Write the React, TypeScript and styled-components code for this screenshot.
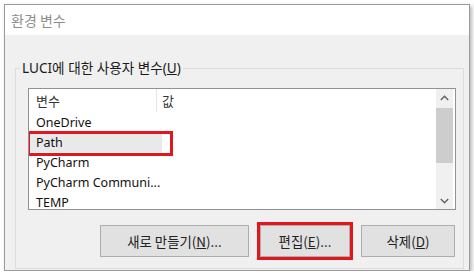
import React from "react";
import styled, { createGlobalStyle } from "styled-components";

const Global = createGlobalStyle`
  html, body { margin: 0; padding: 0; background: #ffffff; }
  body { font-family: "Noto Sans", "Noto Sans CJK KR", sans-serif; }
  * { box-sizing: border-box; }
`;

const Page = styled.div`
  padding: 4px 0 0 4px;
`;

const Window = styled.div`
  width: 466px;
  height: 267px;
  border: 1px solid #9a9a9a;
  box-shadow: 2px 2px 4px rgba(0, 0, 0, 0.28);
  display: flex;
  flex-direction: column;
  background: #f0f0f0;
`;

const TitleBar = styled.div`
  height: 30px;
  flex: none;
  background: #ffffff;
  display: flex;
  align-items: center;
  padding-left: 6px;
  color: #8e8e8e;
  font-family: "Noto Sans CJK KR", sans-serif;
  font-size: 14px;
`;

const Body = styled.div`
  flex: 1;
  display: flex;
  flex-direction: column;
  padding: 25px 5px 1px 10px;
`;

const Group = styled.fieldset`
  flex: 1;
  margin: 0;
  border: 1px solid #dcdcdc;
  padding: 0 7px 0 12px;
  display: flex;
  flex-direction: column;
  min-height: 0;
`;

const GroupLabel = styled.legend`
  margin-left: -8px;
  padding: 0 2px;
  height: 16px;
  line-height: 16px;
  font-family: "Noto Sans", "Noto Sans CJK KR", sans-serif;
  font-size: 13.6px;
  color: #1a1a1a;
`;

const Key = styled.span`
  text-decoration: underline;
`;

const ListBox = styled.div`
  margin-top: 12px;
  height: 122px;
  border: 1px solid #8f9299;
  background: #ffffff;
  display: flex;
  overflow: hidden;
`;

const Table = styled.div`
  flex: 1;
  display: flex;
  flex-direction: column;
`;

const HeaderRow = styled.div`
  height: 23px;
  flex: none;
  display: flex;
  font-family: "Noto Sans CJK KR", sans-serif;
  font-size: 13px;
  color: #333;
`;

const HeaderCell = styled.div<{ $w?: number }>`
  ${(p) => (p.$w ? `width: ${p.$w}px; border-right: 1px solid #e5e5e5;` : "flex: 1;")}
  padding-left: ${(p) => (p.$w ? 7 : 5)}px;
  display: flex;
  align-items: center;
`;

const Row = styled.div`
  position: relative;
  height: 20px;
  flex: none;
  display: flex;
`;

const NameCell = styled.div<{ $selected?: boolean }>`
  width: 133px;
  padding-left: 7px;
  display: flex;
  align-items: center;
  background: ${(p) => (p.$selected ? "#e9e9e9" : "transparent")};
  font-size: 12.5px;
  color: #111;
  white-space: nowrap;
`;

const Mark = styled.span`
  position: absolute;
  left: -2px;
  top: -1px;
  width: 146px;
  height: 25px;
  border: 3px solid #e3161e;
  pointer-events: none;
`;

const ScrollBar = styled.div`
  width: 17px;
  flex: none;
  margin-right: 2px;
  background: #f0f0f0;
  display: flex;
  flex-direction: column;
`;

const Arrow = styled.div`
  height: 17px;
  flex: none;
  display: flex;
  align-items: center;
  justify-content: center;
`;

const Track = styled.div`
  flex: 1;
  padding-top: 2px;
`;

const Thumb = styled.div`
  height: 55px;
  background: #cdcdcd;
`;

const Buttons = styled.div`
  margin-top: 15px;
  display: flex;
  justify-content: flex-end;
  gap: 11px;
  padding-right: 1px;
`;

const Button = styled.button<{ $w: number; $marked?: boolean }>`
  width: ${(p) => p.$w}px;
  height: 32px;
  border: 1px solid #adadad;
  background: #e1e1e1;
  font-family: "Noto Sans CJK KR", sans-serif;
  font-size: 13.4px;
  color: #222;
  padding: 0;
  ${(p) => (p.$marked ? "outline: 3px solid #e3161e; outline-offset: 0px;" : "")}
`;

const Up = () => (
  <svg width="9" height="6" viewBox="0 0 9 6">
    <path d="M0.8 5 L4.5 1.3 L8.2 5" fill="none" stroke="#606060" strokeWidth="1.4" />
  </svg>
);
const Down = () => (
  <svg width="9" height="6" viewBox="0 0 9 6">
    <path d="M0.8 1 L4.5 4.7 L8.2 1" fill="none" stroke="#606060" strokeWidth="1.4" />
  </svg>
);

const rows = ["OneDrive", "Path", "PyCharm", "PyCharm Communi...", "TEMP"];

export default function App() {
  return (
    <>
      <Global />
      <Page>
        <Window>
          <TitleBar>환경 변수</TitleBar>
          <Body>
            <Group>
              <GroupLabel>
                LUCI에 대한 사용자 변수(<Key>U</Key>)
              </GroupLabel>
              <ListBox>
                <Table>
                  <HeaderRow>
                    <HeaderCell $w={128}>변수</HeaderCell>
                    <HeaderCell>값</HeaderCell>
                  </HeaderRow>
                  {rows.map((r) => (
                    <Row key={r}>
                      <NameCell $selected={r === "Path"}>{r}</NameCell>
                      {r === "Path" && <Mark />}
                    </Row>
                  ))}
                </Table>
                <ScrollBar>
                  <Arrow>
                    <Up />
                  </Arrow>
                  <Track>
                    <Thumb />
                  </Track>
                  <Arrow>
                    <Down />
                  </Arrow>
                </ScrollBar>
              </ListBox>
              <Buttons>
                <Button $w={149}>
                  새로 만들기(<Key>N</Key>)...
                </Button>
                <Button $w={90} $marked>
                  편집(<Key>E</Key>)...
                </Button>
                <Button $w={94}>
                  삭제(<Key>D</Key>)
                </Button>
              </Buttons>
            </Group>
          </Body>
        </Window>
      </Page>
    </>
  );
}
